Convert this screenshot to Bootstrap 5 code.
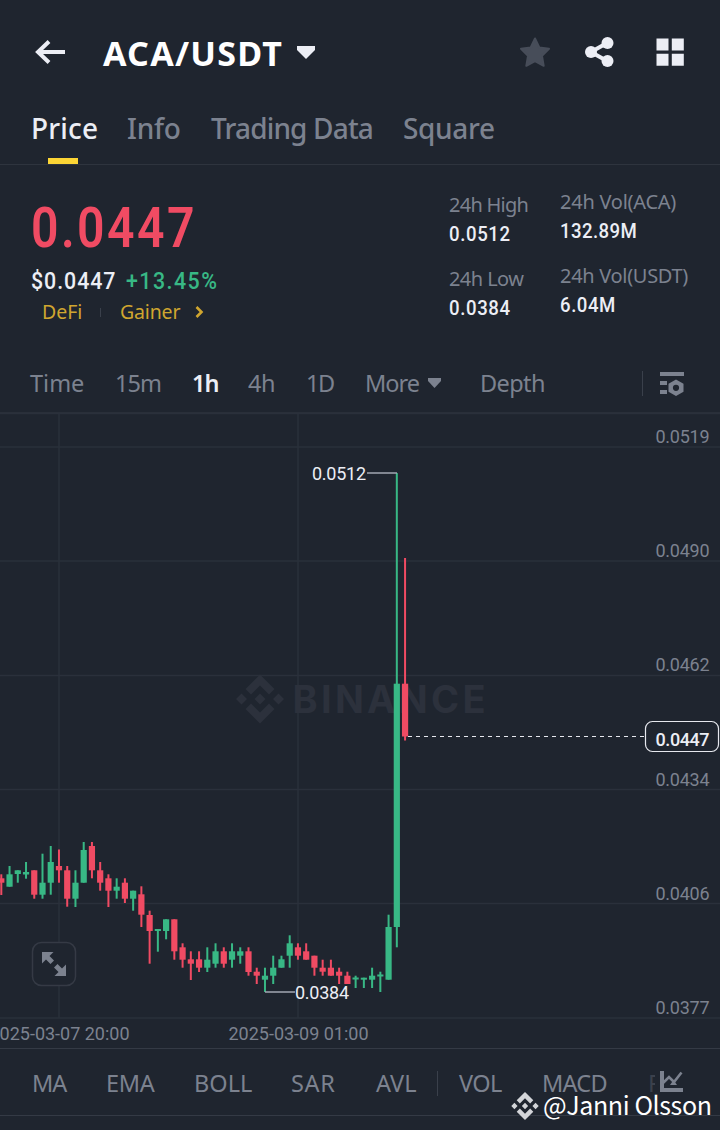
<!DOCTYPE html>
<html lang="en">
<head>
<meta charset="utf-8">
<meta name="viewport" content="width=device-width, initial-scale=1">
<title>ACA/USDT</title>
<link href="https://cdn.jsdelivr.net/npm/bootstrap@5.3.0/dist/css/bootstrap.min.css" rel="stylesheet">
<style>
:root{--bg:#1f252f;--line:#2e343e;--muted:#7c828f;--light:#eceef5;--up:#38b885;--down:#f04b63;--gold:#d0a62f}
html,body{height:1130px;overflow:hidden}
body{background:var(--bg);color:var(--light);font-family:"Noto Sans","Open Sans",sans-serif}
.screen{width:720px;height:1130px;overflow:hidden}
.num{font-family:Roboto,"Liberation Sans",sans-serif}
.dim{color:var(--muted)}
[data-w]{display:inline-block;white-space:nowrap}
.num [data-w]{transform-origin:0 50%;transform:scaleX(var(--sx,.93))}
svg{display:block}
.topbar{display:grid;height:104px;grid-template-columns:33px 70px 193px 221px 67px 71px 1fr}
.topbar h1{font-size:34px;font-weight:700;line-height:48px;color:#fff;padding-top:1px}
.tabs{display:grid;height:61px;grid-template-columns:31px 96px 84px 192px 1fr;border-bottom:1px solid var(--line);font-size:28px;font-weight:500;line-height:48px}
.tabs .bar{width:30px;height:6px;background:#fcd535;margin:6px 0 0 17px}
.summary{height:190px}
.left{width:449px;padding-left:31px}
.last{--sx:.86;font-size:56px;font-weight:600;line-height:66px;color:var(--down);margin-top:30px}
.fiat{display:grid;grid-template-columns:95px 1fr;font-size:23px;font-weight:500;line-height:30px;margin-top:6px}
.tags{display:grid;grid-template-columns:11px 58px 20px 75px 1fr;font-size:19.5px;line-height:30px;color:var(--gold)}
.stats{font-size:20px;line-height:29px}
.stats .num{font-weight:500;line-height:31px;height:29px}
.stats .second{margin-top:16px}
.intervals{display:grid;height:58px;grid-template-columns:30px 85px 77px 56px 58px 59px 62px 53px 162px 18px 1fr;border-bottom:1px solid #292f39;font-size:23.5px;line-height:57px}
.vline{width:1px;height:25px;background:#3a404b}
.chart{height:635px}
.chart text{font-family:Roboto,"Liberation Sans",sans-serif;font-size:18px;fill:var(--muted)}
.chart .hi{fill:var(--light)}
.chart .brand{font-family:Inter,sans-serif;font-weight:700;font-size:38px;fill:#2c313c}
.indicators{display:grid;height:68px;border-top:1px solid #343a45;border-bottom:1px solid #343a45;grid-template-columns:32px 74px 88px 97px 85px 61px 22px 83px 106px 11px 1fr;font-size:23.5px;line-height:68px}
.author{left:511px;top:1086px;color:#fff;font:400 25px/37px "Noto Sans CJK SC",sans-serif;height:40px}
</style>
<script src="https://cdn.jsdelivr.net/npm/bootstrap@5.3.0/dist/js/bootstrap.bundle.min.js"></script>
</head>
<body>
<main class="screen position-relative">
  <header class="topbar align-items-center">
    <span></span>
    <svg width="34" height="28" viewBox="0 0 34 28" fill="none" stroke="#eceef5" stroke-width="4"><path d="M32 14H5M16 3.500 5 14l11 10.500"/></svg>
    <h1 class="m-0"><span data-w="180">ACA/USDT</span></h1>
    <svg width="20" height="15" viewBox="0 0 20 15" fill="#eceef5"><path d="M1 1h18v4L10 14 1 5z"/></svg>
    <svg width="36" height="34" viewBox="0 0 36 34" fill="#474d59" stroke="#474d59" stroke-width="2" stroke-linejoin="round"><path d="m18 3.500 4.300 9 9.700 1.300-7 7 1.700 10-8.700-4.600-8.700 4.600 1.700-10-7-7 9.700-1.300z"/></svg>
    <svg width="32" height="32" viewBox="0 0 32 32" fill="#eceef5"><path d="M23 7 7 16l16 9" fill="none" stroke="#eceef5" stroke-width="4"/><circle cx="7" cy="16" r="6"/><circle cx="23.500" cy="7" r="6"/><circle cx="23.500" cy="25" r="6"/></svg>
    <svg width="30" height="28" viewBox="0 0 30 28" fill="#eceef5"><path d="M1.500.5h12v12h-12zM16.800.5h12v12h-12zM1.500 15.700h12v12h-12zM16.800 15.700h12v12h-12z"/></svg>
  </header>

  <nav class="tabs dim">
    <span></span>
    <div style="color:var(--light)"><span data-w="67">Price</span><div class="bar"></div></div>
    <div><span data-w="54">Info</span></div>
    <div><span data-w="162">Trading Data</span></div>
    <div><span data-w="92">Square</span></div>
  </nav>

  <section class="summary d-flex">
    <div class="left">
      <div class="last num"><span data-w="193">0.0447</span></div>
      <div class="fiat num"><span><span data-w="92">$0.0447</span></span><span style="color:var(--up)"><span data-w="99">+13.45%</span></span></div>
      <div class="tags align-items-center">
        <span></span><span><span data-w="40">DeFi</span></span>
        <i class="vline" style="height:9px"></i>
        <span><span data-w="60">Gainer</span></span>
        <svg width="10" height="14" viewBox="0 0 10 14" fill="none" stroke="#d0a62f" stroke-width="2.600"><path d="m1.500 2 5 5-5 5"/></svg>
      </div>
    </div>
    <div class="stats" style="width:111px;padding-top:25px">
      <div class="dim"><span data-w="79">24h High</span></div><div class="num"><span data-w="66">0.0512</span></div>
      <div class="dim second"><span data-w="74">24h Low</span></div><div class="num"><span data-w="66">0.0384</span></div>
    </div>
    <div class="stats" style="padding-top:22px">
      <div class="dim"><span data-w="116">24h Vol(ACA)</span></div><div class="num"><span data-w="83">132.89M</span></div>
      <div class="dim second"><span data-w="128">24h Vol(USDT)</span></div><div class="num"><span data-w="60">6.04M</span></div>
    </div>
  </section>

  <nav class="intervals dim align-items-center">
    <span></span>
    <div><span data-w="54">Time</span></div>
    <div><span data-w="46">15m</span></div>
    <div class="fw-semibold" style="color:var(--light)"><span data-w="26">1h</span></div>
    <div><span data-w="27">4h</span></div>
    <div><span data-w="28">1D</span></div>
    <div><span data-w="54">More</span></div>
    <svg width="15" height="12" viewBox="0 0 15 12" fill="#7c828f"><path d="M1 0h13v3l-6.500 7L1 3z"/></svg>
    <div><span data-w="65">Depth</span></div>
    <i class="vline"></i>
    <svg width="24" height="26" viewBox="0 0 24 26" fill="#7c828f"><path d="M0 1h24v4H0zM0 10h7v4H0zM0 19h7v4H0z"/><path fill-rule="evenodd" d="m16 8.500 7.500 4.200v8L16 25l-7.500-4.300v-8zm0 5.200a3.100 3.100 0 1 0 0 6.200 3.100 3.100 0 0 0 0-6.200z"/></svg>
  </nav>

  <section class="chart">
    <svg id="plot" width="720" height="635" viewBox="0 413 720 635">
      <g stroke="#2a303b" stroke-width="1.500">
        <path d="M0 413.500H720M0 447H720M0 561H720M0 675.500H720M0 789.500H720M0 903.500H720M0 1018H720M59 413V1018M298 413V1018"/>
      </g>
      <g fill="#2c313c">
        <path id="diamond" fill="inherit" d="m260 674.500 14.500 14.500-5.500 5.500-9-9-9 9-5.500-5.500zM260 723.500l14.500-14.500-5.500-5.500-9 9-9-9-5.500 5.500zM260 693.500l5.500 5.500-5.500 5.500-5.500-5.500zM241.500 693.500l5.500 5.500-5.500 5.500-5.500-5.500zM278.500 693.500l5.500 5.500-5.500 5.500-5.500-5.500z"/>
        <text class="brand" x="292.500" y="713" textLength="193">BINANCE</text>
      </g>
      <g id="candles"></g>
      <path d="M367 473H397M265 992H295" stroke="#a2a7b2" stroke-width="1.500"/>
      <path d="M408 736.500H645" stroke="#e6e8ee" stroke-dasharray="4 4"/>
      <rect x="645.500" y="721.500" width="73" height="30" rx="7" fill="#1f252f" stroke="#e6e8ee" stroke-width="1.200"/>
      <text class="hi" x="312" y="480" textLength="54">0.0512</text>
      <text class="hi" x="295" y="999" textLength="54">0.0384</text>
      <text x="655.500" y="443" textLength="54">0.0519</text>
      <text x="655.500" y="557" textLength="54">0.0490</text>
      <text x="655.500" y="671" textLength="54">0.0462</text>
      <text class="hi" x="655.500" y="746" textLength="54" font-weight="500">0.0447</text>
      <text x="655.500" y="786" textLength="54">0.0434</text>
      <text x="655.500" y="900" textLength="54">0.0406</text>
      <text x="655.500" y="1014" textLength="54">0.0377</text>
      <text x="-10.500" y="1040" textLength="140">2025-03-07 20:00</text>
      <text x="228.500" y="1040" textLength="140">2025-03-09 01:00</text>
      <rect x="32.500" y="942.500" width="43" height="43" rx="9" fill="#1f252f" stroke="#353a45" stroke-width="1.500"/>
      <g fill="#7c828f"><path d="M42 952h11.500l-4 4 4.500 4.500-3.500 3.500-4.500-4.500-4 4zM66 976H54.500l4-4-4.500-4.500 3.500-3.500 4.500 4.500 4-4z"/></g>
    </svg>
  </section>

  <nav class="indicators dim align-items-center">
    <span></span>
    <div><span data-w="34">MA</span></div>
    <div><span data-w="48">EMA</span></div>
    <div><span data-w="58">BOLL</span></div>
    <div><span data-w="45">SAR</span></div>
    <div><span data-w="41">AVL</span></div>
    <i class="vline"></i>
    <div><span data-w="43">VOL</span></div>
    <div><span data-w="65">MACD</span></div>
    <div class="overflow-hidden" style="width:7px;opacity:.3">F</div>
    <svg width="24" height="26" viewBox="0 0 24 26" fill="none" stroke="#7c828f"><path d="M3 1v19H24" stroke-width="4"/><path d="m4 13 6-6 5 5 7.500-9.500" stroke-width="2.600"/><path d="m14.500 10 3.500 5h-7z" fill="#7c828f" stroke="none"/></svg>
  </nav>

  <div class="author position-absolute d-flex">
    <svg class="mt-1" style="position:relative" width="28" height="32" viewBox="235.500 674.500 49 49" fill="#d3d5d9"><use href="#diamond"/></svg>
    <span class="ms-1"><span data-w="169">@Janni Olsson</span></span>
  </div>
</main>
<script>
// Each candle: direction, high, body top, body bottom, low (vertical chart units)
const candles = [
['d',874.3,878.3,882.7,895],['u',866,874.3,886.7,886.7],['u',870.3,870.3,874,882.7],['u',862,872,874.5,878.7],
['d',870.3,870.3,894.7,898.7],['u',853.7,882.7,894.7,898.7],['u',846,862,882.7,894.7],['d',849.5,866,870.3,882.7],
['d',866,870.3,898.7,906.7],['u',870.3,882.7,898.7,907],['u',842,850,882.7,882.7],['d',842,846,870.3,878.3],
['d',862,870.3,882.7,890.7],['d',874.3,878.3,890.7,907],['u',878.3,886.7,890.7,898.7],['d',878.3,882.7,898.7,903],
['u',890.7,890.7,898.7,910.7],['d',886.3,894.3,914.7,927],['d',910.7,915,931,963.7],['u',929,929,931,951.7],
['u',919.3,919.3,931,939.3],['d',919.3,919.3,951.3,959.7],['d',943.3,947.3,959.7,967.7],['d',951.3,959.3,963.7,980],
['d',951.3,959.3,967.7,972],['u',947.3,959.7,967.7,972],['u',943.3,951.3,963.7,967.7],['d',947.3,951.3,963.7,967.7],
['u',943.3,951.3,959.7,967.7],['u',947.3,951.3,955.7,963.7],['d',947.3,951.3,972,975.7],['d',967.7,971.7,975.7,984],
['u',967.7,975.7,979.7,992],['u',955.7,967.7,975.7,984],['u',955.7,959.3,967.7,967.7],['u',935.3,943.3,955.7,967.7],
['d',943.3,947.3,955.7,959.7],['d',943.3,951.3,959.7,959.7],['d',955.7,955.7,967.7,975.7],['d',959.7,967.7,971.7,975.7],
['d',959.7,967.7,975.7,975.7],['d',967.7,971.7,975.7,984],['d',971.7,975.7,984,984],['u',975.7,977.5,979.5,988],
['u',977.7,977.7,979.7,988],['u',967.7,975.7,979.7,988],['u',971.7,974.5,976.5,992],['u',914.7,927,979.7,979.7],
['u',473,683.7,927,947.3],['d',558,683.7,736.5,740.5]];
document.getElementById('candles').innerHTML = candles.map(([dir,hi,top,bot,lo],i)=>{
  const x = 1.3 + i*8.24, c = dir==='u' ? '#38b885' : '#f04b63';
  return `<g fill="${c}"><rect x="${x-1}" y="${hi}" width="2" height="${lo-hi}"/><rect x="${x-3.1}" y="${top}" width="6.200" height="${bot-top}"/></g>`;
}).join('');
document.querySelectorAll('[data-w]').forEach(el=>{
  const n = el.textContent.length, s = (el.dataset.w - el.offsetWidth)/n;
  el.style.letterSpacing = s.toFixed(3)+'px';
});
</script>
</body>
</html>
